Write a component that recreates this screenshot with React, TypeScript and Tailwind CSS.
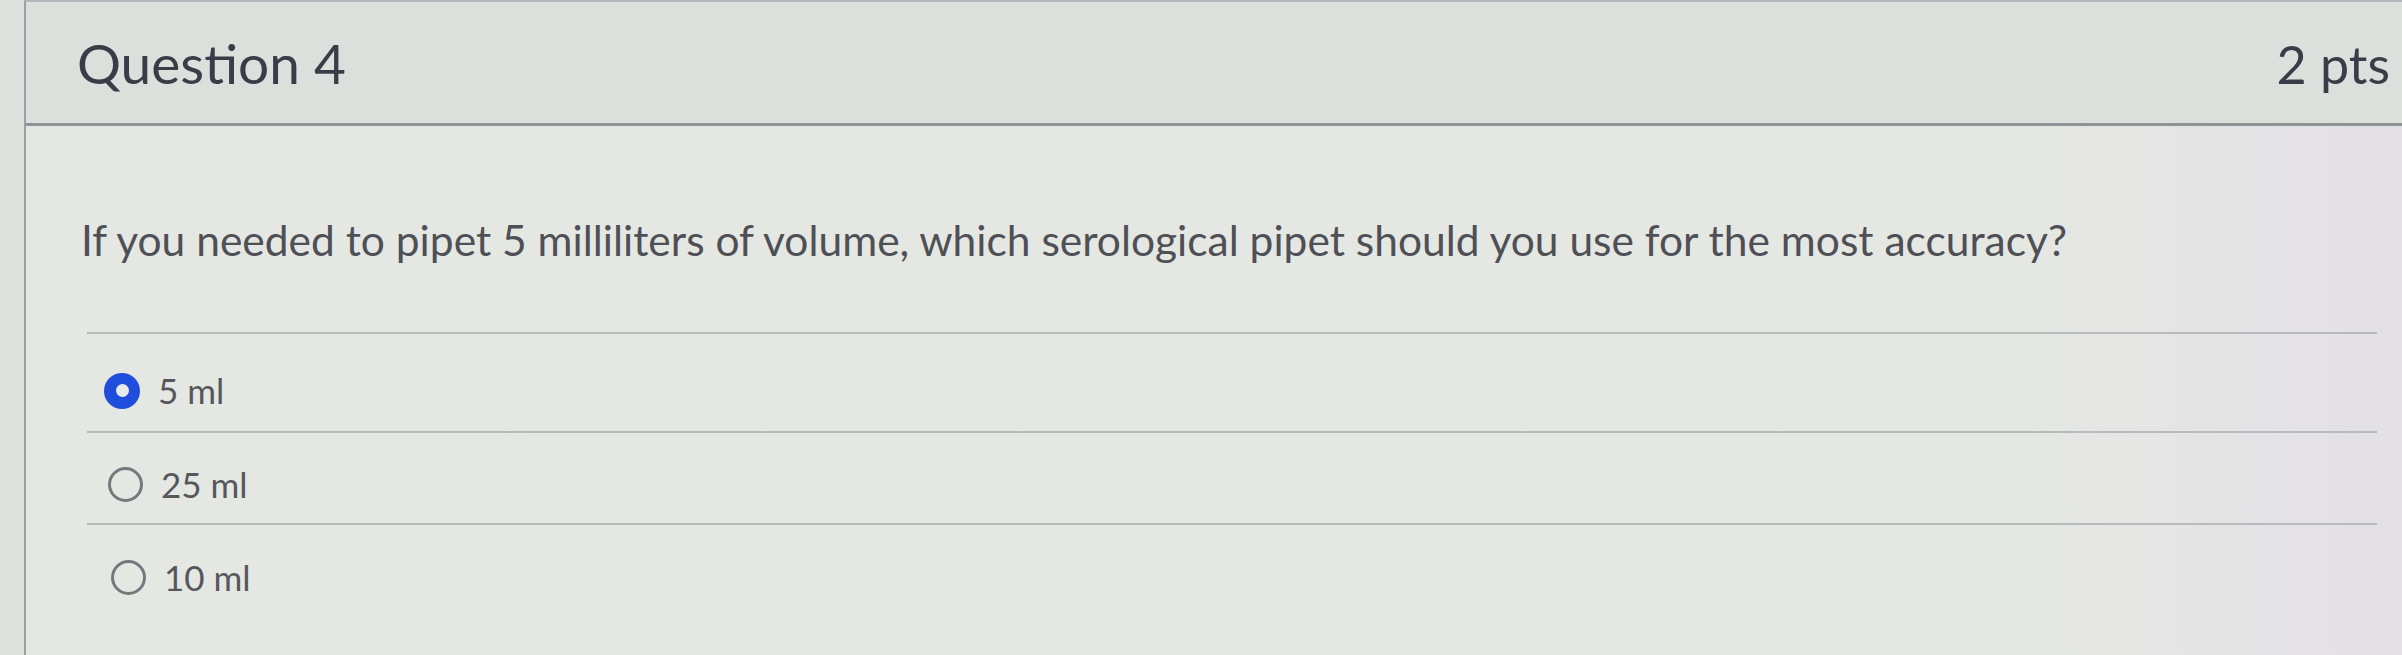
const answers = [
  { id: 'a', label: '5 ml', selected: true },
  { id: 'b', label: '25 ml', selected: false },
  { id: 'c', label: '10 ml', selected: false },
];

function Radio({ selected }: { selected: boolean }) {
  if (selected) {
    return (
      <span className="flex h-[36px] w-[36px] shrink-0 items-center justify-center rounded-full bg-[#1f4edc]">
        <span className="h-[13px] w-[13px] rounded-full bg-[#e9ebe8]" />
      </span>
    );
  }
  return <span className="h-[35px] w-[35px] shrink-0 rounded-full border-[3px] border-[#76787d]" />;
}

export default function App() {
  return (
    <div className="h-[655px] w-full overflow-hidden bg-[#dfe1dd] font-['Lato','Noto_Sans',sans-serif]">
      <div className="ml-[24px] flex h-full flex-col border-l-2 border-t-2 border-l-[#9c9fa3] border-t-[#b4b7b9]">
        {/* Header */}
        <div className="flex h-[124px] shrink-0 items-center justify-between border-b-[3px] border-[#8f9396] bg-[#dcdfdb] pl-[51px] pr-[12px] pt-[2px] text-[#3a3c47]">
          <h2 className="text-[55px] leading-none">Question 4</h2>
          <span className="text-[52px] leading-none">2 pts</span>
        </div>

        {/* Body */}
        <div className="flex-1 bg-linear-to-r from-[#e5e7e3] from-85% to-[#e3e0e6] pr-[25px]">
          <p className="pl-[55px] pt-[88px] text-[42.5px] leading-[51px] text-[#4e5056]">
            If you needed to pipet 5 milliliters of volume, which serological pipet should you use for the most accuracy?
          </p>
          <div className="ml-[61px] mt-[67px] border-t-2 border-[#b8babb]">
            {answers.map((a, i) => (
              <div
                key={a.id}
                className={`flex items-center gap-[18px] ${i === 0 ? 'h-[99px] pl-[17px] pt-[16px]' : i === 1 ? 'h-[92px] pl-[21px] pt-[12px]' : 'h-[92px] pl-[24px] pt-[12px]'} ${i < answers.length - 1 ? 'border-b-2 border-[#b8babb]' : ''}`}
              >
                <Radio selected={a.selected} />
                <span className="text-[35px] leading-none text-[#55575c]">{a.label}</span>
              </div>
            ))}
          </div>
        </div>
      </div>
    </div>
  );
}
